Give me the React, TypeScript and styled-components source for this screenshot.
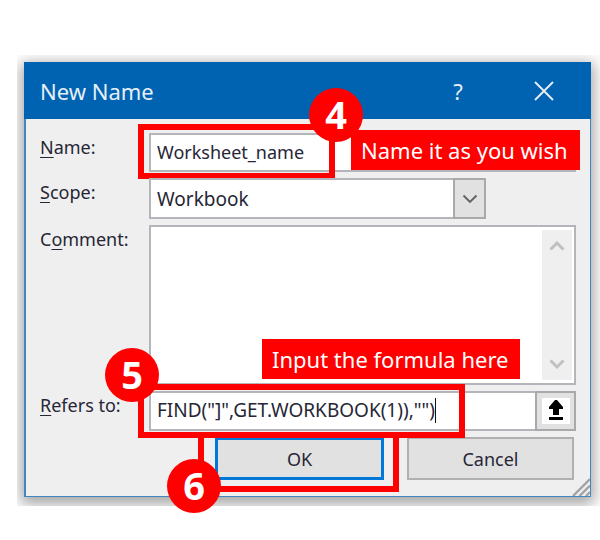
import React from "react";
import styled, { createGlobalStyle } from "styled-components";

const RED = "#fe0000";
const BLUE = "#0063b1";

const GlobalStyle = createGlobalStyle`
  *, *::before, *::after { box-sizing: border-box; }
  body { margin: 0; background: #fff; overflow: hidden; }
  body, input, select, textarea, button {
    font-family: "Noto Sans", "Open Sans", sans-serif;
    font-size: 18px;
    color: #262636;
  }
`;

const Page = styled.main`
  padding: 62px 9px 40px 24px;
`;

const Dialog = styled.section`
  position: relative;
  isolation: isolate;
  border: 1px solid #3f87c2;
  border-left-width: 2px;
  background: #efefef;

  &::before {
    content: "";
    position: absolute;
    inset: -1px -1px -1px -2px;
    z-index: -1;
    box-shadow: 0 4px 14px 3px rgba(0, 0, 0, 0.36);
    clip-path: inset(-7px -9px -9px -7px);
  }
`;

const TitleBar = styled.header`
  display: flex;
  align-items: center;
  height: 57px;
  margin: -1px -1px 0 -2px;
  padding: 1px 33px 0 16px;
  background: ${BLUE};
`;

const Title = styled.h1`
  flex: 1;
  margin: 0;
  font-size: 22px;
  line-height: 30px;
  font-weight: 400;
  color: #e6eef6;
`;

const TitleButton = styled.button`
  display: grid;
  place-items: center;
  width: 28px;
  height: 40px;
  margin-left: 58px;
  padding: 0;
  border: 0;
  background: none;
  font-size: 22px;
  color: #e6eef6;
`;

const Form = styled.form`
  display: grid;
  grid-template-columns: 109px 1fr;
  row-gap: 6px;
  padding: 14px 14px 16px;
`;

const Label = styled.label`
  line-height: 28px;
  white-space: nowrap;

  u { text-underline-offset: 3px; }
`;

const Field = styled.div<{ $height: number }>`
  position: relative;
  display: flex;
  height: ${(p) => p.$height}px;
`;

const TextInput = styled.input<{ $large?: boolean }>`
  flex: 1;
  min-width: 0;
  padding: 0 6px 2px;
  border: 2px solid #b4b4bb;
  border-radius: 0;
  background: #fff;
  outline: none;
  font-size: ${(p) => (p.$large ? 19 : 18)}px;
`;

const SelectBox = styled.div`
  position: relative;
  display: flex;
  width: 79%;
`;

const Select = styled.select`
  flex: 1;
  appearance: none;
  padding: 0 6px;
  border: 2px solid #b4b4bb;
  border-radius: 0;
  background: #fff;
  font-size: 19px;
`;

const SelectArrow = styled.span`
  position: absolute;
  inset: 0 0 0 auto;
  display: grid;
  place-items: center;
  width: 33px;
  border: 2px solid #a9a9ac;
  background: #e1e1e1;
  pointer-events: none;
`;

const CommentBox = styled.div`
  flex: 1;
  display: flex;
  padding: 3px 2px;
  border: 2px solid #b4b4bb;
  background: #fff;
`;

const TextArea = styled.textarea`
  flex: 1;
  min-width: 0;
  padding: 2px 6px;
  border: 0;
  background: none;
  resize: none;
  outline: none;
`;

const ScrollTrack = styled.div`
  display: flex;
  flex-direction: column;
  justify-content: space-between;
  align-items: center;
  width: 30px;
  padding: 10px 0;
  background: #efefef;
`;

const PickButton = styled.button`
  display: grid;
  place-items: center;
  width: 41px;
  margin-left: -2px;
  padding: 0;
  border: 2px solid #a9a9ac;
  background: #e1e1e1;
`;

const Caret = styled.span`
  position: absolute;
  top: 7px;
  left: 286px;
  width: 1px;
  height: 25px;
  background: #111;
`;

const Actions = styled.div`
  position: relative;
  grid-column: 2;
  display: flex;
  gap: 23px;
  height: 43px;
  padding: 0 2px 0 66px;
`;

const ActionButton = styled.button<{ $primary?: boolean }>`
  flex: 1;
  padding: 0;
  border: ${(p) => (p.$primary ? "3px solid #0078d7" : "2px solid #b0b0b3")};
  background: #e1e1e1;
`;

const Highlight = styled.div<{
  $left: number;
  $width: number;
  $top: number;
  $height: number;
  $raised?: boolean;
}>`
  position: absolute;
  z-index: ${(p) => (p.$raised ? 1 : "auto")};
  left: ${(p) => p.$left}px;
  top: ${(p) => p.$top}px;
  width: ${(p) => p.$width}px;
  height: ${(p) => p.$height}px;
  border: 6px solid ${RED};
  pointer-events: none;
`;

const Step = styled.span<{ $left: number; $top: number }>`
  position: absolute;
  z-index: 2;
  left: ${(p) => p.$left}px;
  top: ${(p) => p.$top}px;
  width: 54px;
  height: 54px;
  border-radius: 50%;
  background: ${RED};
  color: #fff;
  font-size: 38px;
  line-height: 52px;
  font-weight: 700;
  text-align: center;
`;

const Callout = styled.span<{ $right: number; $top: number; $width: number }>`
  position: absolute;
  z-index: 1;
  right: ${(p) => p.$right}px;
  top: ${(p) => p.$top}px;
  width: ${(p) => p.$width}px;
  padding-left: 10px;
  background: ${RED};
  color: #fff;
  font-size: 22px;
  line-height: 40px;
  white-space: nowrap;
`;

const Grip = styled.svg`
  position: absolute;
  right: 0;
  bottom: 0;
`;

function ScrollChevron({ down = false }: { down?: boolean }) {
  return (
    <svg width="16" height="11" viewBox="0 0 16 11" fill="none" stroke="#c0c0c2" strokeWidth="3" aria-hidden="true">
      <path d={down ? "M1.5 1.5 8 8 14.5 1.5" : "M1.5 9.5 8 3 14.5 9.5"} />
    </svg>
  );
}

export default function App() {
  return (
    <>
      <GlobalStyle />
      <Page>
        <Dialog role="dialog" aria-labelledby="dialog-title">
          <TitleBar>
            <Title id="dialog-title">New Name</Title>
            <TitleButton type="button" aria-label="Help">?</TitleButton>
            <TitleButton type="button" aria-label="Close">
              <svg width="20" height="20" viewBox="0 0 20 20" stroke="#e6eef6" strokeWidth="1.9" aria-hidden="true">
                <path d="M1 1 19 19M19 1 1 19" />
              </svg>
            </TitleButton>
          </TitleBar>

          <Form onSubmit={(e) => e.preventDefault()}>
            <Label htmlFor="name"><u>N</u>ame:</Label>
            <Field $height={39}>
              <TextInput id="name" defaultValue="Worksheet_name" spellCheck={false} />
              <Highlight $left={-11} $top={-9} $width={197} $height={55} />
              <Callout $right={-4} $top={-3} $width={229}>Name it as you wish</Callout>
              <Step $left={160} $top={-45}>4</Step>
            </Field>

            <Label htmlFor="scope"><u>S</u>cope:</Label>
            <Field $height={41}>
              <SelectBox>
                <Select id="scope" defaultValue="Workbook">
                  <option>Workbook</option>
                </Select>
                <SelectArrow>
                  <svg width="16" height="10" viewBox="0 0 16 10" fill="none" stroke="#606060" strokeWidth="1.8" aria-hidden="true">
                    <path d="M1.5 1.5 8 8 14.5 1.5" />
                  </svg>
                </SelectArrow>
              </SelectBox>
            </Field>

            <Label htmlFor="comment">C<u>o</u>mment:</Label>
            <Field $height={160}>
              <CommentBox>
                <TextArea id="comment" />
                <ScrollTrack>
                  <ScrollChevron />
                  <ScrollChevron down />
                </ScrollTrack>
              </CommentBox>
              <Callout $right={56} $top={114} $width={258}>Input the formula here</Callout>
            </Field>

            <Label htmlFor="refers"><u>R</u>efers to:</Label>
            <Field $height={40}>
              <TextInput id="refers" $large defaultValue={'FIND("]",GET.WORKBOOK(1)),"")'} spellCheck={false} />
              <Caret />
              <PickButton type="button" aria-label="Pick a range">
                <svg width="28" height="26" viewBox="0 0 28 26" aria-hidden="true">
                  <rect width="28" height="26" fill="#fff" />
                  <path d="M13 2H15L21 9V11H17V17H11V11H7V9Z" fill="#000" />
                  <rect x="7" y="19" width="14" height="3" fill="#000" />
                </svg>
              </PickButton>
              <Highlight $raised $left={-11} $top={-7} $width={327} $height={54} />
              <Step $left={-44} $top={-43}>5</Step>
            </Field>

            <Actions>
              <ActionButton $primary type="submit">OK</ActionButton>
              <ActionButton type="button">Cancel</ActionButton>
              <Highlight $left={49} $top={-5} $width={201} $height={60} />
              <Step $left={18} $top={22}>6</Step>
            </Actions>
          </Form>
          <Grip width="18" height="18" viewBox="0 0 18 18" stroke="#a3a3a3" strokeWidth="2.4" aria-hidden="true">
            <path d="M1 18 18 1M7.500 18 18 7.500M14 18 18 14" />
          </Grip>
        </Dialog>
      </Page>
    </>
  );
}
